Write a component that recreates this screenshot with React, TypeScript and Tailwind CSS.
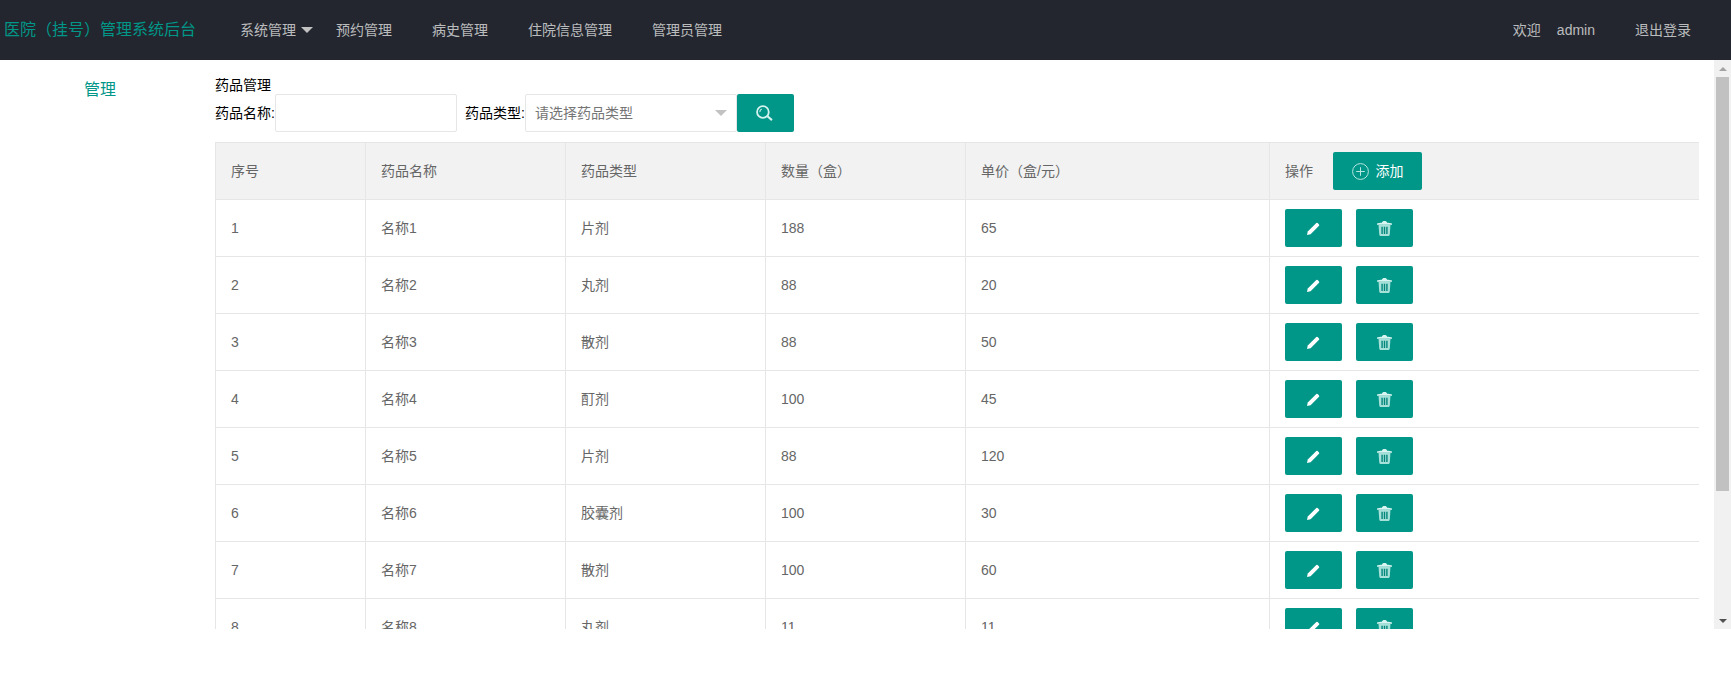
const medicines = [
  { id: 1, name: "名称1", type: "片剂", count: 188, price: 65 },
  { id: 2, name: "名称2", type: "丸剂", count: 88, price: 20 },
  { id: 3, name: "名称3", type: "散剂", count: 88, price: 50 },
  { id: 4, name: "名称4", type: "酊剂", count: 100, price: 45 },
  { id: 5, name: "名称5", type: "片剂", count: 88, price: 120 },
  { id: 6, name: "名称6", type: "胶囊剂", count: 100, price: 30 },
  { id: 7, name: "名称7", type: "散剂", count: 100, price: 60 },
  { id: 8, name: "名称8", type: "丸剂", count: 11, price: 11 },
];

const navItems = ["预约管理", "病史管理", "住院信息管理", "管理员管理"];

function Caret({ className }: { className: string }) {
  return (
    <svg viewBox="0 0 12 6" className={className} fill="currentColor">
      <path d="M0 0h12L6 6z" />
    </svg>
  );
}

function PencilIcon() {
  return (
    <svg viewBox="0 0 12 12" className="h-[13px] w-[13px]" fill="#fff">
      <path d="M0 12l.7-3.3L8.6.9a.9.9 0 0 1 1.2 0l1.3 1.3a.9.9 0 0 1 0 1.2L3.3 11.2z" />
    </svg>
  );
}

function TrashIcon() {
  return (
    <svg viewBox="0 0 14 14" className="mr-[1px] h-[15px] w-[15px]">
      <path d="M0 2.4C1 1.9 3 1.6 4.6 1.6 4.8.5 5.5 0 7 0s2.2.5 2.4 1.6c1.6 0 3.6.3 4.6.8v1.2H0z" fill="#d8f5f1" />
      <path d="M1.4 3.6h11.2l-.7 9c-.1.9-.6 1.4-1.4 1.4H3.5c-.8 0-1.3-.5-1.4-1.4z" fill="#a5e0d9" />
      <path d="M4.1 5.4h1.3v6.8H4.1zM6.35 5.4h1.3v6.8H6.35zM8.6 5.4h1.3v6.8H8.6z" fill="#00857a" />
    </svg>
  );
}

function SearchIcon() {
  return (
    <svg viewBox="0 0 16 15" className="mr-[3px] h-[16px] w-[17px]" fill="none">
      <circle cx="6.5" cy="6.5" r="5.5" stroke="#d5f3ef" strokeWidth="1.7" />
      <path d="M3.6 6.7a3 3 0 0 1 1.8-2.9" stroke="#d5f3ef" strokeWidth="1" />
      <path d="M10.8 10.6l4.2 3.6" stroke="#d5f3ef" strokeWidth="2" />
    </svg>
  );
}

function PlusCircleIcon() {
  return (
    <svg viewBox="0 0 17 17" className="h-[17px] w-[17px]" fill="none" stroke="#b8e6e0">
      <circle cx="8.5" cy="8.5" r="7.9" strokeWidth="1" />
      <path d="M8.5 4.2v8.6M4.2 8.5h8.6" strokeWidth="1" />
    </svg>
  );
}

function ActionButton({ children }: { children: React.ReactNode }) {
  return (
    <button className="flex h-[38px] w-[57px] items-center justify-center rounded-[2px] bg-[#009688]">
      {children}
    </button>
  );
}

export default function App() {
  return (
    <div
      className="flex h-[673px] w-[1731px] flex-col overflow-hidden bg-white text-[14px] text-[#666]"
      style={{ fontFamily: '"Liberation Sans", "Noto Sans CJK SC", sans-serif' }}
    >
      <header className="flex h-[60px] shrink-0 items-center bg-[#23262E] text-white/70">
        <div className="w-[220px] pl-[4px] text-[16px] text-[#009688]">医院（挂号）管理系统后台</div>
        <nav className="flex items-center">
          <a className="flex items-center pl-[20px] pr-[3px]">
            系统管理
            <Caret className="ml-[5px] h-[6px] w-[12px] text-[#c2c2c2]" />
          </a>
          {navItems.map((item) => (
            <a key={item} className="px-[20px]">
              {item}
            </a>
          ))}
        </nav>
        <div className="ml-auto flex items-center pr-[20px]">
          <span className="px-[20px]">
            欢迎<span className="ml-[16px]">admin</span>
          </span>
          <a className="px-[20px]">退出登录</a>
        </div>
      </header>

      <div className="flex h-[569px] shrink-0 overflow-hidden">
        <aside className="w-[215px] shrink-0 pl-[84px] pt-[18px] text-[16px] text-[#009688]">管理</aside>

        <main className="w-[1484px] shrink-0 overflow-hidden pt-[16px]">
          <div className="h-[18px] leading-[18px] text-black">药品管理</div>
          <div className="flex items-center text-black">
            <label className="w-[60px]">药品名称:</label>
            <input className="h-[38px] w-[182px] rounded-[2px] border border-[#e6e6e6] bg-white" />
            <label className="ml-[8px] w-[60px]">药品类型:</label>
            <div className="flex h-[38px] w-[212px] items-center rounded-[2px] border border-[#e6e6e6] pl-[9px] pr-[9px] text-[#757575]">
              请选择药品类型
              <Caret className="ml-auto h-[6px] w-[12px] text-[#c2c2c2]" />
            </div>
            <button className="flex h-[38px] w-[57px] items-center justify-center rounded-[2px] bg-[#009688]">
              <SearchIcon />
            </button>
          </div>

          <table className="mt-[10px] w-[1484px] table-fixed border-collapse border border-[#e6e6e6]">
            <colgroup>
              <col className="w-[150px]" />
              <col className="w-[200px]" />
              <col className="w-[200px]" />
              <col className="w-[200px]" />
              <col className="w-[304px]" />
              <col className="w-[430px]" />
            </colgroup>
            <thead>
              <tr className="h-[57px] bg-[#f2f2f2] text-left">
                <th className="border border-[#e6e6e6] px-[15px] font-normal">序号</th>
                <th className="border border-[#e6e6e6] px-[15px] font-normal">药品名称</th>
                <th className="border border-[#e6e6e6] px-[15px] font-normal">药品类型</th>
                <th className="border border-[#e6e6e6] px-[15px] font-normal">数量（盒）</th>
                <th className="border border-[#e6e6e6] px-[15px] font-normal">单价（盒/元）</th>
                <th className="border border-[#e6e6e6] px-[15px] font-normal">
                  <div className="flex items-center">
                    操作
                    <button className="ml-[20px] flex h-[38px] w-[89px] items-center justify-center gap-[7px] rounded-[2px] bg-[#009688] text-white">
                      <PlusCircleIcon />
                      添加
                    </button>
                  </div>
                </th>
              </tr>
            </thead>
            <tbody>
              {medicines.map((row) => (
                <tr key={row.id} className="h-[57px]">
                  <td className="border border-[#e6e6e6] px-[15px]">{row.id}</td>
                  <td className="border border-[#e6e6e6] px-[15px]">{row.name}</td>
                  <td className="border border-[#e6e6e6] px-[15px]">{row.type}</td>
                  <td className="border border-[#e6e6e6] px-[15px]">{row.count}</td>
                  <td className="border border-[#e6e6e6] px-[15px]">{row.price}</td>
                  <td className="border border-[#e6e6e6] px-[15px]">
                    <div className="flex gap-[14px]">
                      <ActionButton>
                        <PencilIcon />
                      </ActionButton>
                      <ActionButton>
                        <TrashIcon />
                      </ActionButton>
                    </div>
                  </td>
                </tr>
              ))}
            </tbody>
          </table>
        </main>

        {/* scrollbar is drawn since headless chrome hides the real one */}
        <div className="ml-auto flex w-[17px] shrink-0 flex-col items-center bg-[#f1f1f1]">
          <div className="flex h-[17px] shrink-0 items-center justify-center">
            <svg viewBox="0 0 8 4" className="h-[4px] w-[8px]" fill="#a3a3a3">
              <path d="M4 0l4 4H0z" />
            </svg>
          </div>
          <div className="h-[414px] w-[13px] shrink-0 bg-[#c1c1c1]" />
          <div className="mt-auto flex h-[17px] shrink-0 items-center justify-center">
            <svg viewBox="0 0 8 4" className="h-[4px] w-[8px]" fill="#505050">
              <path d="M0 0h8L4 4z" />
            </svg>
          </div>
        </div>
      </div>
    </div>
  );
}
